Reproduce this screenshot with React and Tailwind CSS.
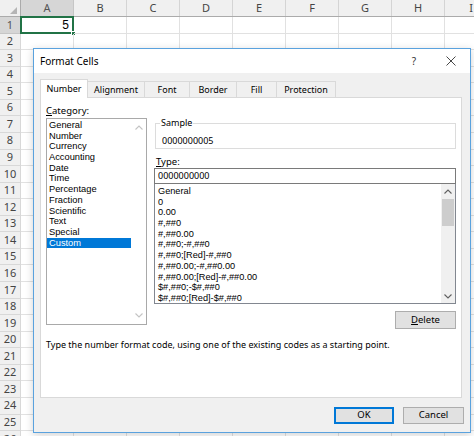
import React from "react";

const cols = ["A", "B", "C", "D", "E", "F", "G", "H", "I"];
const rows = Array.from({ length: 26 }, (_, i) => i + 1);

const categories = [
  "General",
  "Number",
  "Currency",
  "Accounting",
  "Date",
  "Time",
  "Percentage",
  "Fraction",
  "Scientific",
  "Text",
  "Special",
  "Custom",
];

const types = [
  "General",
  "0",
  "0.00",
  "#,##0",
  "#,##0.00",
  "#,##0;-#,##0",
  "#,##0;[Red]-#,##0",
  "#,##0.00;-#,##0.00",
  "#,##0.00;[Red]-#,##0.00",
  "$#,##0;-$#,##0",
  "$#,##0;[Red]-$#,##0",
];

const tabs = [
  { label: "Number", w: "w-[48px]" },
  { label: "Alignment", w: "w-[57px]" },
  { label: "Font", w: "w-[45px]" },
  { label: "Border", w: "w-[47px]" },
  { label: "Fill", w: "w-[40px]" },
  { label: "Protection", w: "w-[59px]" },
];

function ChevronUp({ color }) {
  return (
    <svg width="8" height="5" viewBox="0 0 8 5">
      <path d="M0.5 4.5 L4 1 L7.5 4.5" stroke={color} strokeWidth="1.1" fill="none" />
    </svg>
  );
}

function ChevronDown({ color }) {
  return (
    <svg width="8" height="5" viewBox="0 0 8 5">
      <path d="M0.5 0.5 L4 4 L7.5 0.5" stroke={color} strokeWidth="1.1" fill="none" />
    </svg>
  );
}

function Sheet() {
  return (
    <div className="flex flex-col">
      <div className="flex h-[17px] bg-[#f0f0f0] border-b border-[#ababab] shrink-0">
        <div className="w-[21px] shrink-0 border-r border-[#ababab] flex items-end justify-end pr-[3px] pb-[2px]">
          <svg width="7" height="7" viewBox="0 0 7 7">
            <path d="M7 0 L7 7 L0 7 Z" fill="#b5b5b5" />
          </svg>
        </div>
        {cols.map((c) => (
          <div
            key={c}
            className={
              c === "A"
                ? "w-[53px] shrink-0 border-r border-[#c6c6c6] bg-[#d6d6d6] text-[#555] flex items-center justify-center text-[11px]"
                : "w-[53px] shrink-0 border-r border-[#d4d4d4] text-[#444] flex items-center justify-center text-[11px]"
            }
          >
            {c}
          </div>
        ))}
      </div>
      {rows.map((r) => (
        <div key={r} className="flex h-[16.57px] shrink-0">
          <div
            className={
              r === 1
                ? "w-[21px] shrink-0 bg-[#d6d6d6] border-r border-[#ababab] border-b border-[#c6c6c6] flex items-center justify-center text-[11px] text-[#555]"
                : "w-[21px] shrink-0 bg-[#f0f0f0] border-r border-[#ababab] border-b border-[#d8d8d8] flex items-center justify-center text-[11px] text-[#444]"
            }
          >
            {r}
          </div>
          {cols.map((c) => (
            <div
              key={c}
              className="relative w-[53px] shrink-0 border-r border-b border-[#e1e1e1] flex items-center justify-end pr-[4px] text-[12px]"
            >
              {r === 1 && c === "A" ? (
                <>
                  <span className="font-['Liberation_Sans',sans-serif] text-[12px] text-black">5</span>
                  <div className="absolute -left-[1px] -top-[1px] -right-[1px] -bottom-[1px] border-2 border-[#217346]" />
                  <div className="absolute -right-[3px] -bottom-[3px] w-[5px] h-[5px] bg-[#217346] border border-white" />
                </>
              ) : null}
            </div>
          ))}
        </div>
      ))}
    </div>
  );
}

function Dialog() {
  return (
    <div className="absolute left-[33px] top-[48px] w-[438px] h-[385px] border border-[#5aa2de] bg-[#f0f0f0] shadow-[0_2px_8px_rgba(0,0,0,0.18)] flex flex-col text-black">
      <div className="h-[24px] bg-white flex items-center justify-between shrink-0">
        <span className="pl-[6px] text-[10px]">Format Cells</span>
        <div className="flex items-center gap-[7px] mr-[4px]">
          <div className="w-[30px] flex justify-center text-[10px] text-[#333]">?</div>
          <div className="w-[30px] flex justify-center">
            <svg width="10" height="10" viewBox="0 0 10 10">
              <path d="M0.5 0.5 L9.5 9.5 M9.5 0.5 L0.5 9.5" stroke="#333" strokeWidth="0.9" />
            </svg>
          </div>
        </div>
      </div>

      <div className="flex flex-col px-[6px] pt-[6px]">
        <div className="flex items-end h-[18px]">
          {tabs.map((t, i) =>
            i === 0 ? (
              <div
                key={t.label}
                className={`${t.w} h-[19px] -mb-px relative z-10 bg-white border border-b-0 border-[#d9d9d9] flex items-center justify-center text-[9px]`}
              >
                {t.label}
              </div>
            ) : (
              <div
                key={t.label}
                className={`${t.w} h-[16px] border-t border-r border-[#d9d9d9] flex items-center justify-center text-[9px]`}
              >
                {t.label}
              </div>
            )
          )}
        </div>

        <div className="w-[422px] h-[301px] bg-white border border-[#d9d9d9] flex flex-col pl-[5px]">
          <div className="flex">
            <div className="w-[101px] flex flex-col pt-[7px]">
              <div className="leading-[12px] text-[9.5px]">
                <u className="underline-offset-[1px]">C</u>ategory:
              </div>
              <div className="mt-px h-[207px] border border-[#a9a9a9] flex">
                <div className="flex-1 flex flex-col pt-px font-['Liberation_Sans',sans-serif]">
                  {categories.map((c) => (
                    <div
                      key={c}
                      className={
                        c === "Custom"
                          ? "h-[10.7px] leading-[10.7px] text-[9.3px] pl-[2px] bg-[#0078d7] text-white"
                          : "h-[10.7px] leading-[10.7px] text-[9.3px] pl-[2px]"
                      }
                    >
                      {c}
                    </div>
                  ))}
                </div>
                <div className="w-[15px] flex flex-col items-center justify-between pt-[6px] pb-[6px]">
                  <ChevronUp color="#c4c4c4" />
                  <ChevronDown color="#c4c4c4" />
                </div>
              </div>
            </div>

            <div className="w-[302px] ml-[7px] flex flex-col">
              <div className="relative mt-[25px] ml-px w-[301px] h-[26px] border border-[#dcdcdc] pl-[6px] pt-[11px]">
                <span className="absolute left-[4px] -top-[7px] bg-white px-px leading-[12px] text-[9px]">Sample</span>
                <div className="leading-[12px] text-[9px]">0000000005</div>
              </div>
              <div className="mt-[7px] pl-[2px] leading-[12px] text-[9.5px]">
                <u className="underline-offset-[1px]">T</u>ype:
              </div>
              <div className="h-[16px] border border-[#7a7a7a] flex items-center pl-[3px] text-[9px]">0000000000</div>
              <div className="h-[120px] border border-[#828790] border-t-0 flex">
                <div className="flex-1 flex flex-col pt-[2px] pl-[3px] font-['Liberation_Sans',sans-serif]">
                  {types.map((t) => (
                    <div key={t} className="h-[10.7px] leading-[10.7px] text-[9.2px] whitespace-nowrap">
                      {t}
                    </div>
                  ))}
                </div>
                <div className="w-[14px] bg-[#f0f0f0] flex flex-col">
                  <div className="h-[15px] flex items-center justify-center">
                    <ChevronUp color="#606060" />
                  </div>
                  <div className="h-[27px] mx-[1px] bg-[#cdcdcd]" />
                  <div className="flex-1" />
                  <div className="h-[14px] flex items-center justify-center">
                    <ChevronDown color="#606060" />
                  </div>
                </div>
              </div>
              <div className="mt-[7px] self-end w-[61px] h-[18px] bg-[#e1e1e1] border border-[#adadad] flex items-center justify-center text-[9.5px]">
                <span>
                  <u className="underline-offset-[1px]">D</u>elete
                </span>
              </div>
            </div>
          </div>
          <div className="mt-[10px] leading-[12px] text-[9px] whitespace-nowrap">
            Type the number format code, using one of the existing codes as a starting point.
          </div>
        </div>

        <div className="mt-[9px] flex justify-end gap-[9px]">
          <div className="w-[60px] h-[17px] bg-[#e1e1e1] border-2 border-[#0078d7] flex items-center justify-center text-[9.5px]">
            OK
          </div>
          <div className="w-[61px] h-[17px] bg-[#e1e1e1] border border-[#adadad] flex items-center justify-center text-[9.5px]">
            Cancel
          </div>
        </div>
      </div>
    </div>
  );
}

export default function App() {
  return (
    <div className="relative w-[474px] h-[436px] overflow-hidden bg-white font-['Noto_Sans',sans-serif] text-black">
      <Sheet />
      <Dialog />
    </div>
  );
}
